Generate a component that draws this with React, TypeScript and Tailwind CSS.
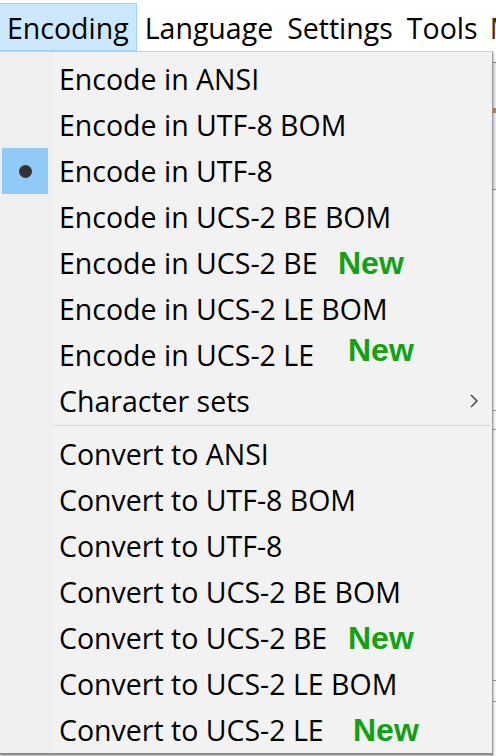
const encodeItems = [
  { label: "Encode in ANSI" },
  { label: "Encode in UTF-8 BOM" },
  { label: "Encode in UTF-8", checked: true },
  { label: "Encode in UCS-2 BE BOM" },
  { label: "Encode in UCS-2 BE", badge: "left-[338px]" },
  { label: "Encode in UCS-2 LE BOM" },
  { label: "Encode in UCS-2 LE", badge: "left-[348px] -top-[5px]" },
  { label: "Character sets", submenu: true },
];

const convertItems = [
  { label: "Convert to ANSI" },
  { label: "Convert to UTF-8 BOM" },
  { label: "Convert to UTF-8" },
  { label: "Convert to UCS-2 BE BOM" },
  { label: "Convert to UCS-2 BE", badge: "left-[348px]" },
  { label: "Convert to UCS-2 LE BOM" },
  { label: "Convert to UCS-2 LE", badge: "left-[353px]" },
];

type Item = { label: string; checked?: boolean; badge?: string; submenu?: boolean };

function MenuRow({ item }: { item: Item }) {
  return (
    <div className="relative h-[46px] flex items-center">
      {/* check gutter */}
      <div className="w-[59px] h-full shrink-0 flex items-center pl-[2px]">
        {item.checked && (
          <div className="w-[46px] h-full bg-[#91c9f7] flex items-center justify-center">
            <div className="w-[13px] h-[13px] rounded-full bg-[#333333]" />
          </div>
        )}
      </div>
      <span className="leading-[46px] text-black whitespace-nowrap">{item.label}</span>
      {item.badge && (
        <span
          className={`absolute ${item.badge} leading-[46px] text-[32px] font-bold text-[#13a013] font-['Liberation_Sans',Arial,sans-serif]`}
        >
          New
        </span>
      )}
      {item.submenu && (
        <svg className="absolute left-[469px] top-[15px]" width="10" height="16" viewBox="0 0 10 16">
          <path d="M2 2 L8 8 L2 14" fill="none" stroke="#333" strokeWidth="1.3" />
        </svg>
      )}
    </div>
  );
}

export default function App() {
  return (
    <div className="w-[496px] h-[756px] overflow-hidden bg-white flex flex-col font-['Open_Sans','Noto_Sans',sans-serif] text-[28.5px]">
      {/* Menu bar */}
      <div className="h-[51px] shrink-0 flex items-end whitespace-nowrap text-black">
        <div className="h-[48px] px-[7px] leading-[48px] bg-[#cce8ff] border border-l-0 border-[#99d1ff]">Encoding</div>
        <div className="h-[48px] pl-[8px] pr-[7px] leading-[50px]">Language</div>
        <div className="h-[48px] px-[7px] leading-[50px]">Settings</div>
        <div className="h-[48px] px-[7px] leading-[50px]">Tools</div>
        <div className="h-[48px] px-[5px] leading-[50px] text-[#3a2a1a]">Macro</div>
      </div>

      <div className="flex flex-1 min-h-0">
        {/* Dropdown */}
        <div className="w-[493px] h-[704px] shrink-0 bg-[#f2f2f2] border-t border-[#cfcfcf] border-r border-r-[#9a9a9a] border-b-2 border-b-[#8c8c8c] shadow-[1px_2px_2px_rgba(0,0,0,0.25)] relative">
          <div className="absolute left-0 top-0 bottom-0 w-[54px] bg-[#efefef]" />
          <div className="relative pt-[4px]">
            {encodeItems.map((it) => (
              <MenuRow key={it.label} item={it} />
            ))}
            <div className="h-[7px] pl-[54px] pr-[2px] pt-[1px]">
              <div className="h-px bg-[#d7d7d7]" />
            </div>
            {convertItems.map((it) => (
              <MenuRow key={it.label} item={it} />
            ))}
          </div>
        </div>

        {/* Window behind the menu */}
        <div className="flex-1 flex flex-col bg-white">
          <div className="h-[11px]" />
          <div className="h-[128px] bg-[#e9edf2] border-y border-[#8a8a8a] flex flex-col">
            <div className="h-[45px]" />
            <div className="h-[5px] bg-[#c08a4a]" />
          </div>
          <div className="h-[220px]" />
          <div className="h-px bg-[#9a9a9a]" />
          <div className="h-[18px]" />
          <div className="h-px bg-[#9a9a9a]" />
          <div className="h-[250px]" />
          <div className="h-px bg-[#9a9a9a]" />
          <div className="h-[20px]" />
          <div className="h-px bg-[#9a9a9a]" />
        </div>
      </div>
    </div>
  );
}
